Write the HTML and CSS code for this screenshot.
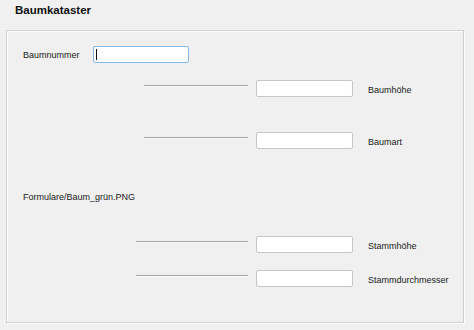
FILE: index.html
```html
<!DOCTYPE html>
<html>
<head>
<meta charset="utf-8">
<link rel="stylesheet" href="styles.css">
</head>
<body>
<div class="window">
  <div class="title">Baumkataster</div>
  <div class="group">
    <div class="row row-first">
      <span class="label-left">Baumnummer</span>
      <div class="field field-focus"><span class="caret"></span></div>
    </div>
    <div class="row row-b">
      <span class="sep sep-short"></span>
      <div class="field"></div>
      <span class="label-right">Baumhöhe</span>
    </div>
    <div class="row row-c">
      <span class="sep sep-short"></span>
      <div class="field"></div>
      <span class="label-right">Baumart</span>
    </div>
    <div class="path">Formulare/Baum_grün.PNG</div>
    <div class="row row-d">
      <span class="sep sep-long"></span>
      <div class="field"></div>
      <span class="label-right">Stammhöhe</span>
    </div>
    <div class="row row-e">
      <span class="sep sep-long"></span>
      <div class="field"></div>
      <span class="label-right">Stammdurchmesser</span>
    </div>
  </div>
</div>
</body>
</html>
```

FILE: styles.css
```css
html, body {
  margin: 0;
  padding: 0;
  background: #f0f0f0;
}
.window {
  width: 474px;
  height: 330px;
  font-family: "Liberation Sans", Arial, sans-serif;
  font-size: 9px;
  color: #1a1a1a;
  box-sizing: border-box;
  padding-top: 3px;
}
.title {
  font-weight: bold;
  font-size: 11.5px;
  line-height: 14px;
  padding-left: 15px;
  color: #111;
  height: 27px;
}
.group {
  margin-left: 6px;
  width: 458px;
  height: 293px;
  box-sizing: border-box;
  border: 1px solid #d0d0d0;
  box-shadow: inset 1px 1px 0 #fdfdfd, 1px 1px 0 #fdfdfd;
  display: flex;
  flex-direction: column;
}
.row {
  display: flex;
  align-items: center;
  height: 17px;
}
.row-first {
  margin-top: 15px;
  padding-left: 16px;
}
.row-b { margin-top: 17px; }
.row-c { margin-top: 35px; }
.row-d { margin-top: 33px; }
.row-e { margin-top: 17px; }
.label-left {
  width: 70px;
  line-height: 12px;
}
.field {
  box-sizing: border-box;
  width: 97px;
  height: 17px;
  background: #fff;
  border: 1px solid #c6c6c6;
  border-radius: 2px;
  display: flex;
  align-items: center;
  padding-left: 2px;
}
.field-focus {
  width: 96px;
  border-color: #86b9e6;
}
.caret {
  width: 1px;
  height: 11px;
  background: #111;
}
.sep {
  height: 1px;
  border-top: 1px solid #a6a6a6;
  background: #fbfbfb;
  margin-right: 8px;
  margin-bottom: 5px;
}
.sep-short {
  margin-left: 137px;
  width: 104px;
}
.sep-long {
  margin-left: 129px;
  width: 112px;
}
.label-right {
  margin-left: 15px;
  line-height: 12px;
  margin-top: 2px;
}
.path {
  margin-top: 42px;
  padding-left: 16px;
  line-height: 12px;
  height: 12px;
}
```
